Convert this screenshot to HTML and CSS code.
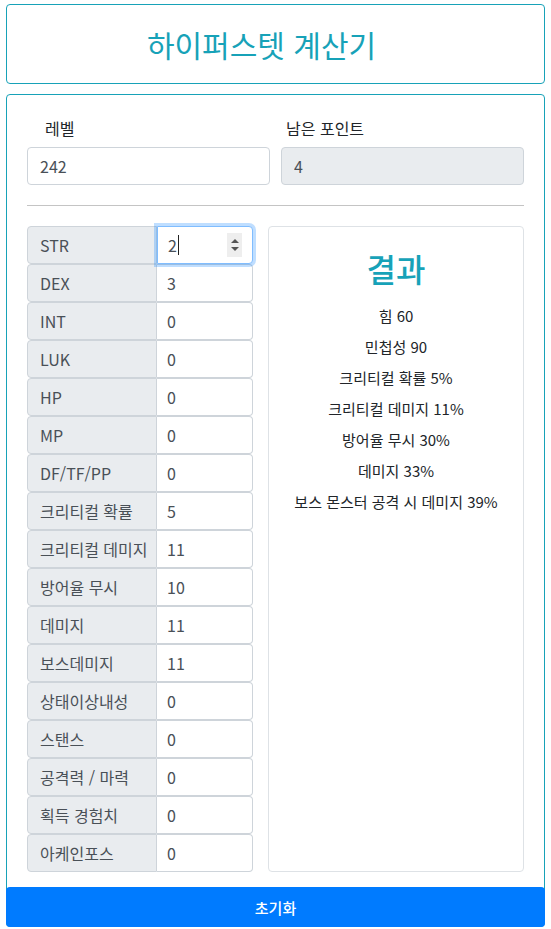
FILE: index.html
```html
<!DOCTYPE html>
<html lang="ko">
<head>
<meta charset="utf-8">
<title>하이퍼스텟 계산기</title>
<link rel="stylesheet" href="styles.css">
</head>
<body>
<div class="wrap">
  <div class="card head-card">
    <h1 class="title">하이퍼스텟 계산기</h1>
  </div>
  <div class="card main-card">
    <div class="card-body">
      <div class="top-row">
        <div class="field">
          <label class="lbl lbl-level">레벨</label>
          <input class="form-control" type="text" value="242">
        </div>
        <div class="field">
          <label class="lbl lbl-point">남은 포인트</label>
          <input class="form-control readonly" type="text" value="4" readonly>
        </div>
      </div>
      <hr class="divider">
      <div class="stats-grid">
        <div class="stats">
          <div class="stat"><span class="stat-name">STR</span><div class="stat-val focused"><span class="v">2</span><span class="caret"></span><span class="spin"><svg width="10" height="16" viewBox="0 0 10 16"><path d="M1 6 L5 2 L9 6 Z M1 10 L5 14 L9 10 Z" fill="#555"/></svg></span></div></div>
          <div class="stat"><span class="stat-name">DEX</span><div class="stat-val">3</div></div>
          <div class="stat"><span class="stat-name">INT</span><div class="stat-val">0</div></div>
          <div class="stat"><span class="stat-name">LUK</span><div class="stat-val">0</div></div>
          <div class="stat"><span class="stat-name">HP</span><div class="stat-val">0</div></div>
          <div class="stat"><span class="stat-name">MP</span><div class="stat-val">0</div></div>
          <div class="stat"><span class="stat-name">DF/TF/PP</span><div class="stat-val">0</div></div>
          <div class="stat"><span class="stat-name">크리티컬 확률</span><div class="stat-val">5</div></div>
          <div class="stat"><span class="stat-name">크리티컬 데미지</span><div class="stat-val">11</div></div>
          <div class="stat"><span class="stat-name">방어율 무시</span><div class="stat-val">10</div></div>
          <div class="stat"><span class="stat-name">데미지</span><div class="stat-val">11</div></div>
          <div class="stat"><span class="stat-name">보스데미지</span><div class="stat-val">11</div></div>
          <div class="stat"><span class="stat-name">상태이상내성</span><div class="stat-val">0</div></div>
          <div class="stat"><span class="stat-name">스탠스</span><div class="stat-val">0</div></div>
          <div class="stat"><span class="stat-name">공격력 / 마력</span><div class="stat-val">0</div></div>
          <div class="stat"><span class="stat-name">획득 경험치</span><div class="stat-val">0</div></div>
          <div class="stat"><span class="stat-name">아케인포스</span><div class="stat-val">0</div></div>
        </div>
        <div class="result">
          <h2 class="result-title">결과</h2>
          <p>힘 60</p>
          <p>민첩성 90</p>
          <p>크리티컬 확률 5%</p>
          <p>크리티컬 데미지 11%</p>
          <p>방어율 무시 30%</p>
          <p>데미지 33%</p>
          <p>보스 몬스터 공격 시 데미지 39%</p>
        </div>
      </div>
    </div>
    <button class="btn-reset" type="button">초기화</button>
  </div>
</div>
</body>
</html>
```
FILE: styles.css
```css
* { box-sizing: border-box; }
html, body { margin: 0; padding: 0; background: #fff; }
body {
  font-family: "Noto Sans CJK KR", "Noto Sans", sans-serif;
  font-size: 16px;
  line-height: 1.5;
  color: #212529;
}
.wrap { padding: 4px 6px 0 6px; }
.card {
  border: 1px solid #17a2b8;
  border-radius: 4px;
  background: #fff;
}
.head-card {
  height: 80px;
  display: flex;
  align-items: center;
  justify-content: center;
  padding-right: 28px;
}
.title {
  margin: 0;
  font-size: 30px;
  font-weight: 400;
  color: #17a2b8;
  line-height: 1.2;
}
.main-card { margin-top: 10px; }
.card-body { padding: 21px 20px 15px 20px; }
.top-row {
  display: grid;
  grid-template-columns: 1fr 1fr;
  gap: 11px;
}
.field { display: flex; flex-direction: column; }
.lbl { display: block; margin-bottom: 7px; line-height: 24px; }
.lbl-level { padding-left: 18px; }
.lbl-point { padding-left: 5px; }
.form-control {
  font-family: inherit;
  font-size: 16px;
  height: 38px;
  padding: 6px 12px;
  border: 1px solid #ced4da;
  border-radius: 4px;
  color: #495057;
  background: #fff;
  width: 100%;
  outline: none;
}
.form-control.readonly { background: #e9ecef; }
.divider {
  border: 0;
  border-top: 1px solid #c4c4c4;
  margin: 20px 0;
}
.stats-grid {
  display: grid;
  grid-template-columns: 226px 1fr;
  gap: 15px;
  align-items: stretch;
}
.stats { display: flex; flex-direction: column; }
.stat {
  display: flex;
  height: 38px;
}
.stat-name {
  width: 130px;
  flex: none;
  background: #e9ecef;
  border: 1px solid #ced4da;
  border-radius: 4px 0 0 4px;
  color: #495057;
  padding: 0 12px;
  display: flex;
  align-items: center;
  white-space: nowrap;
}
.stat-val {
  flex: 1;
  border: 1px solid #ced4da;
  border-left: 0;
  border-radius: 0 4px 4px 0;
  color: #495057;
  padding: 0 10px;
  display: flex;
  align-items: center;
  background: #fff;
}
.stat-val.focused {
  border: 1px solid #80bdff;
  box-shadow: 0 0 0 3px rgba(0, 123, 255, 0.25);
  border-radius: 0 4px 4px 0;
  position: relative;
}
.caret {
  display: inline-block;
  width: 1px;
  height: 20px;
  background: #222;
  margin-left: 1px;
}
.spin {
  margin-left: auto;
  margin-right: 0;
  width: 15px;
  height: 24px;
  background: #eee;
  display: flex;
  align-items: center;
  justify-content: center;
}
.result {
  border: 1px solid #dee2e6;
  border-radius: 4px;
  padding: 19px 20px 20px 20px;
  text-align: center;
}
.result-title {
  margin: 0 0 14px 0;
  font-size: 32px;
  font-weight: 500;
  line-height: 44px;
  color: #17a2b8;
}
.result p {
  margin: 0 0 7px 0;
  font-size: 15px;
  line-height: 24px;
  color: #212529;
}
.btn-reset {
  display: block;
  width: calc(100% + 2px);
  margin: 0 -1px -1px -1px;
  height: 40px;
  border: 0;
  border-radius: 4px;
  background: #007bff;
  color: #fff;
  font-family: inherit;
  font-size: 15px;
  font-weight: 500;
}
```
